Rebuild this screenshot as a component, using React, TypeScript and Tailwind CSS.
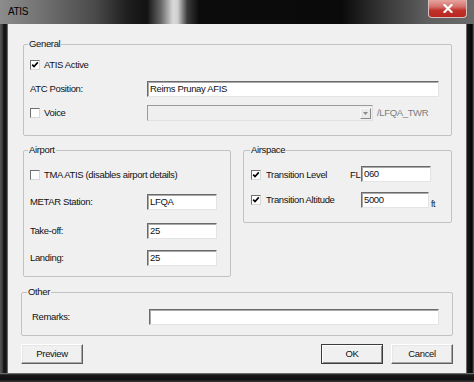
import React from "react";

const txt = "font-['Liberation_Sans',Arial,sans-serif] text-[9.5px] tracking-[-0.35px] text-[#111]";

function Check({ checked }: { checked?: boolean }) {
  return (
    <span className="flex h-[10px] w-[10px] shrink-0 items-center justify-center border border-t-[#6f6f6f] border-l-[#6f6f6f] border-r-[#d8d8d8] border-b-[#d8d8d8] bg-white">
      {checked && (
        <svg width="8" height="8" viewBox="0 0 8 8">
          <path d="M1.2 3.6 L3 5.6 L6.8 1.4" stroke="#000" strokeWidth="1.6" fill="none" />
        </svg>
      )}
    </span>
  );
}

function Field({ w, value }: { w: string; value?: string }) {
  return (
    <div
      className={`flex h-[16px] ${w} items-center border border-t-[#6a6a6a] border-l-[#6a6a6a] border-r-[#e4e4e4] border-b-[#e4e4e4] bg-white pl-[2px] shadow-[inset_1px_1px_0_#a9a9a9]`}
    >
      {value}
    </div>
  );
}

function Btn({ label, def }: { label: string; def?: boolean }) {
  return (
    <div
      className={`flex h-[20px] w-[62px] items-center justify-center bg-[#f0f0f0] ${
        def
          ? "border border-[#3c3c3c] shadow-[inset_1px_1px_0_#fff,inset_-1px_-1px_0_#8a8a8a]"
          : "border border-t-[#ffffff] border-l-[#ffffff] border-r-[#5e5e5e] border-b-[#5e5e5e] shadow-[inset_-1px_-1px_0_#a8a8a8,inset_1px_1px_0_#e6e6e6]"
      }`}
    >
      {label}
    </div>
  );
}

export default function App() {
  return (
    <div className={`flex h-[382px] w-[474px] flex-col overflow-hidden bg-[#161616] ${txt}`}>
      {/* Title bar */}
      <div className="flex h-[24px] shrink-0 items-start bg-[linear-gradient(90deg,#8c8c8c_0%,#747474_8%,#4a4a4a_20%,#1e1e1e_27%,#121212_31%,#6a6a6a_34%,#d9d9d9_36.5%,#cfcfcf_37.5%,#3a3a3a_39.5%,#0c0c0c_42%,#0a0a0a_72%,#3c3c3c_82%,#5e5e5e_90%,#6a6a6a_100%)]">
        <span className="ml-[8px] mt-[6px] text-[10px] leading-[12px] text-black">ATIS</span>
        <div className="ml-auto mr-[7px] flex h-[18px] w-[39px] items-center justify-center rounded-b-[4px] border border-t-0 border-[#d8c0c0] bg-[linear-gradient(180deg,#e6a59f_0%,#d4716a_40%,#c0332b_60%,#b8261f_100%)]">
          <svg width="10" height="9" viewBox="0 0 10 9">
            <path d="M1.5 1 L8.5 8 M8.5 1 L1.5 8" stroke="#fff" strokeWidth="2.2" strokeLinecap="square" />
          </svg>
        </div>
      </div>

      {/* Middle */}
      <div className="flex h-[349px] shrink-0">
        <div className="w-[8px] bg-[linear-gradient(90deg,#5a5a5a_0%,#3a3a3a_30%,#121212_50%,#1a1a1a_80%,#8a8a8a_100%)]" />
        <div className="flex w-[458px] flex-col bg-[#f0f0f0] pt-[14px]">
          {/* General */}
          <fieldset className="ml-[15px] h-[98px] w-[429px] rounded-[2px] border border-[#c2c2c2]">
            <legend className="ml-[4px] px-[1px] leading-[12px]">General</legend>
            <div className="flex flex-col gap-[8px] pl-[6px] pt-[7px]">
              <div className="flex h-[16px] items-center gap-[4px]">
                <Check checked />
                <span>ATIS Active</span>
              </div>
              <div className="flex h-[16px] items-center">
                <span className="w-[117px]">ATC Position:</span>
                <Field w="w-[292px]" value="Reims Prunay AFIS" />
              </div>
              <div className="flex h-[16px] items-center">
                <div className="flex w-[117px] items-center gap-[4px]">
                  <Check />
                  <span>Voice</span>
                </div>
                <div className="flex h-[16px] w-[226px] items-center justify-end border border-t-[#9a9a9a] border-l-[#9a9a9a] border-r-[#e0e0e0] border-b-[#e0e0e0] bg-[#efefef] pr-[1px]">
                  <div className="flex h-[11px] w-[11px] items-center justify-center border border-t-[#fafafa] border-l-[#fafafa] border-r-[#8a8a8a] border-b-[#8a8a8a] bg-[#eaeaea]">
                    <svg width="5" height="3" viewBox="0 0 5 3">
                      <path d="M0 0 H5 L2.5 3 Z" fill="#8a8a8a" />
                    </svg>
                  </div>
                </div>
                <span className="ml-[4px] text-[#7c7c7c]">/LFQA_TWR</span>
              </div>
            </div>
          </fieldset>

          {/* Airport + Airspace */}
          <div className="ml-[15px] mt-[8px] flex items-start gap-[12px]">
            <fieldset className="h-[133px] w-[208px] rounded-[2px] border border-[#c2c2c2]">
              <legend className="ml-[4px] px-[1px] leading-[12px]">Airport</legend>
              <div className="flex flex-col pl-[6px] pt-[11px]">
                <div className="flex h-[16px] items-center gap-[4px]">
                  <Check />
                  <span>TMA ATIS (disables airport details)</span>
                </div>
                <div className="mt-[11px] flex h-[16px] items-center">
                  <span className="w-[117px]">METAR Station:</span>
                  <Field w="w-[70px]" value="LFQA" />
                </div>
                <div className="mt-[13px] flex h-[16px] items-center">
                  <span className="w-[117px]">Take-off:</span>
                  <Field w="w-[70px]" value="25" />
                </div>
                <div className="mt-[11px] flex h-[16px] items-center">
                  <span className="w-[117px]">Landing:</span>
                  <Field w="w-[70px]" value="25" />
                </div>
              </div>
            </fieldset>

            <fieldset className="h-[79px] w-[209px] rounded-[2px] border border-[#c2c2c2]">
              <legend className="ml-[6px] px-[1px] leading-[12px]">Airspace</legend>
              <div className="flex flex-col pl-[7px] pt-[10px]">
                <div className="flex h-[16px] items-center">
                  <div className="flex w-[99px] items-center gap-[5px] pt-[2px]">
                    <Check checked />
                    <span>Transition Level</span>
                  </div>
                  <span className="w-[11px] pt-[2px]">FL</span>
                  <Field w="w-[70px]" value="060" />
                </div>
                <div className="mt-[10px] flex h-[16px] items-center">
                  <div className="flex w-[99px] items-center gap-[5px]">
                    <Check checked />
                    <span>Transition Altitude</span>
                  </div>
                  <span className="w-[11px]" />
                  <Field w="w-[68px]" value="5000" />
                  <span className="ml-[2px] self-end text-[8.5px] leading-[8px] text-[#111]">ft</span>
                </div>
              </div>
            </fieldset>
          </div>

          {/* Other */}
          <fieldset className="ml-[13px] mt-[9px] h-[50px] w-[432px] rounded-[2px] border border-[#c2c2c2]">
            <legend className="ml-[5px] px-[1px] leading-[12px]">Other</legend>
            <div className="mt-[11px] flex h-[16px] items-center pl-[10px]">
              <span className="w-[117px]">Remarks:</span>
              <Field w="w-[290px]" />
            </div>
          </fieldset>

          {/* Buttons */}
          <div className="mt-[8px] flex h-[20px]">
            <div className="ml-[13px]">
              <Btn label="Preview" />
            </div>
            <div className="ml-auto mr-[13px] flex gap-[8px]">
              <Btn label="OK" def />
              <Btn label="Cancel" />
            </div>
          </div>
        </div>
        <div className="w-[8px] bg-[linear-gradient(90deg,#9a9a9a_0%,#1a1a1a_15%,#050505_75%,#6a6a6a_100%)]" />
      </div>

      {/* Bottom frame */}
      <div className="h-[9px] shrink-0 bg-[linear-gradient(180deg,#8a8a8a_0%,#1a1a1a_20%,#101010_70%,#3a3a3a_100%)]" />
    </div>
  );
}
